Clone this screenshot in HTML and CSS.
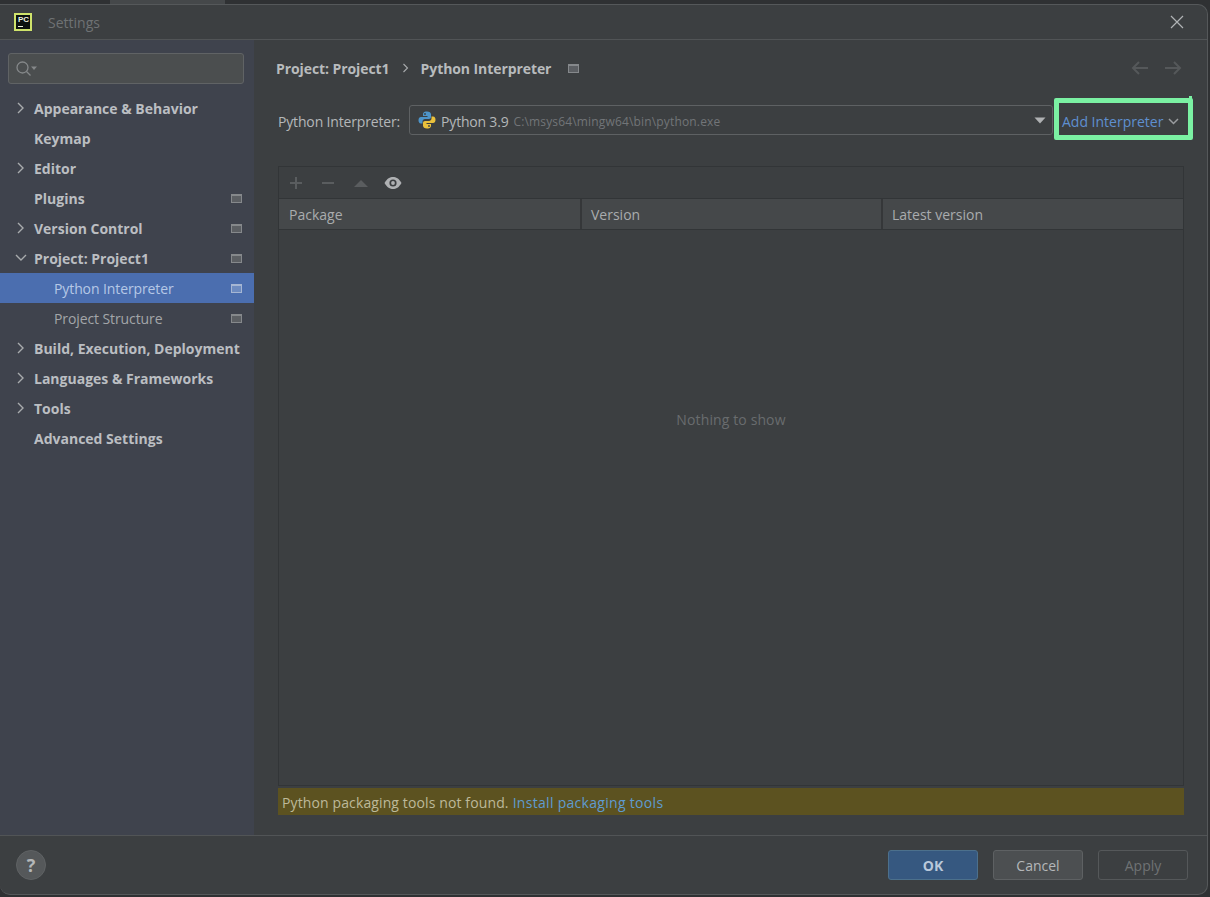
FILE: index.html
```html
<!DOCTYPE html>
<html lang="en">
<head>
  <meta charset="UTF-8" />
  <title>Settings</title>
  <link rel="stylesheet" href="styles.css">
</head>
<body>

  <div class="top-strip"><div class="top-tab"></div></div>

  <div class="dialog">
    <div class="titlebar">
      <div class="app-logo">
        <span class="app-logo-text">PC</span>
        <span class="app-logo-bar"></span>
      </div>
      <span class="titlebar-text">Settings</span>
      <svg class="close-icon" width="14" height="14" viewBox="0 0 14 14"><path d="M1 1 L13 13 M13 1 L1 13" stroke="#b0b3b5" stroke-width="1.2" fill="none"/></svg>
    </div>

    <div class="dialog-body">
      <div class="sidebar">
        <div class="search-box">
          <svg width="24" height="18" viewBox="0 0 24 18"><circle cx="7.5" cy="7.5" r="5.5" stroke="#85888a" stroke-width="1.3" fill="none"/><path d="M11.5 11.5 L15.5 15.5" stroke="#85888a" stroke-width="1.3"/><path d="M16 6.5 H22 L19 10 Z" fill="#85888a"/></svg>
        </div>

        <div class="tree">
          <div class="tree-row bold"><svg class="arrow" width="10" height="12" viewBox="0 0 10 12"><path d="M2 1 L7 6 L2 11" stroke="#a8abad" stroke-width="1.4" fill="none"/></svg><span>Appearance &amp; Behavior</span></div>
          <div class="tree-row bold"><span class="arrow-space"></span><span>Keymap</span></div>
          <div class="tree-row bold"><svg class="arrow" width="10" height="12" viewBox="0 0 10 12"><path d="M2 1 L7 6 L2 11" stroke="#a8abad" stroke-width="1.4" fill="none"/></svg><span>Editor</span></div>
          <div class="tree-row bold"><span class="arrow-space"></span><span>Plugins</span><span class="page-icon"></span></div>
          <div class="tree-row bold"><svg class="arrow" width="10" height="12" viewBox="0 0 10 12"><path d="M2 1 L7 6 L2 11" stroke="#a8abad" stroke-width="1.4" fill="none"/></svg><span>Version Control</span><span class="page-icon"></span></div>
          <div class="tree-row bold"><svg class="arrow arrow-open" width="12" height="10" viewBox="0 0 12 10"><path d="M1 2 L6 7 L11 2" stroke="#a8abad" stroke-width="1.4" fill="none"/></svg><span>Project: Project1</span><span class="page-icon"></span></div>
          <div class="tree-row child selected"><span>Python Interpreter</span><span class="page-icon"></span></div>
          <div class="tree-row child"><span>Project Structure</span><span class="page-icon"></span></div>
          <div class="tree-row bold"><svg class="arrow" width="10" height="12" viewBox="0 0 10 12"><path d="M2 1 L7 6 L2 11" stroke="#a8abad" stroke-width="1.4" fill="none"/></svg><span>Build, Execution, Deployment</span></div>
          <div class="tree-row bold"><svg class="arrow" width="10" height="12" viewBox="0 0 10 12"><path d="M2 1 L7 6 L2 11" stroke="#a8abad" stroke-width="1.4" fill="none"/></svg><span>Languages &amp; Frameworks</span></div>
          <div class="tree-row bold"><svg class="arrow" width="10" height="12" viewBox="0 0 10 12"><path d="M2 1 L7 6 L2 11" stroke="#a8abad" stroke-width="1.4" fill="none"/></svg><span>Tools</span></div>
          <div class="tree-row bold"><span class="arrow-space"></span><span>Advanced Settings</span></div>
        </div>
      </div>

      <div class="content">
        <div class="breadcrumb">
          <span class="crumb">Project: Project1</span>
          <svg class="crumb-sep" width="7" height="10" viewBox="0 0 7 10"><path d="M1.5 1 L5.5 5 L1.5 9" stroke="#a8abad" stroke-width="1.1" fill="none"/></svg>
          <span class="crumb">Python Interpreter</span>
          <span class="page-icon crumb-icon"></span>
          <div class="nav-arrows">
            <svg width="18" height="14" viewBox="0 0 18 14"><path d="M17 7 H2 M8 1 L2 7 L8 13" stroke="#55585a" stroke-width="2" fill="none"/></svg>
            <svg width="18" height="14" viewBox="0 0 18 14"><path d="M1 7 H16 M10 1 L16 7 L10 13" stroke="#55585a" stroke-width="2" fill="none"/></svg>
          </div>
        </div>

        <div class="interpreter-row">
          <span class="interpreter-label">Python Interpreter:</span>
          <div class="interpreter-select">
            <svg class="python-logo" width="18" height="18" viewBox="0 0 18 18">
              <path d="M9 0.5 C5.5 0.5 5 2 5 3.5 V5 H9.5 V6 H3 C1.2 6 0.5 7.5 0.5 9.2 C0.5 11 1.2 12.5 3 12.5 H4.5 V10.5 C4.5 9 5.7 8 7 8 H11 C12.2 8 13 7.2 13 6 V3.5 C13 1.5 11.5 0.5 9 0.5 Z" fill="#4d94c9"/>
              <path d="M9 17.5 C12.5 17.5 13 16 13 14.5 V13 H8.5 V12 H15 C16.8 12 17.5 10.5 17.5 8.8 C17.5 7 16.8 5.5 15 5.5 H13.5 V7.5 C13.5 9 12.3 10 11 10 H7 C5.8 10 5 10.8 5 12 V14.5 C5 16.5 6.5 17.5 9 17.5 Z" fill="#e9c13c"/>
              <circle cx="7" cy="3" r="0.9" fill="#3c3f41"/>
              <circle cx="11" cy="15" r="0.9" fill="#3c3f41"/>
            </svg>
            <span class="interpreter-name">Python 3.9</span>
            <span class="interpreter-path">C:\msys64\mingw64\bin\python.exe</span>
            <svg class="select-caret" width="12" height="7" viewBox="0 0 12 7"><path d="M0.5 0.5 H11.5 L6 6.5 Z" fill="#afb1b3"/></svg>
          </div>
          <div class="add-interpreter">
            <span>Add Interpreter</span>
            <svg width="11" height="7" viewBox="0 0 11 7"><path d="M1 1 L5.5 5.5 L10 1" stroke="#9a9da0" stroke-width="1.5" fill="none"/></svg>
          </div>
        </div>

        <div class="packages">
          <div class="packages-toolbar">
            <svg width="14" height="14" viewBox="0 0 14 14"><path d="M7 1 V13 M1 7 H13" stroke="#5a5d5f" stroke-width="2"/></svg>
            <svg width="14" height="14" viewBox="0 0 14 14"><path d="M1 7 H13" stroke="#5a5d5f" stroke-width="2"/></svg>
            <svg width="16" height="14" viewBox="0 0 16 14"><path d="M1 11 L8 4 L15 11 Z" fill="#5a5d5f"/></svg>
            <svg class="eye-icon" width="18" height="14" viewBox="0 0 18 14"><path d="M0.5 7 C3 2.5 6 1 9 1 C12 1 15 2.5 17.5 7 C15 11.5 12 13 9 13 C6 13 3 11.5 0.5 7 Z" fill="#afb1b3"/><circle cx="9" cy="7" r="3.6" fill="#3c3f41"/><circle cx="9" cy="7" r="1.9" fill="#afb1b3"/></svg>
          </div>
          <div class="packages-header">
            <div class="col">Package</div>
            <div class="col">Version</div>
            <div class="col">Latest version</div>
          </div>
          <div class="packages-empty">Nothing to show</div>
        </div>

        <div class="warning-bar">Python packaging tools not found. <a class="warning-link">Install packaging tools</a></div>
      </div>
    </div>

    <div class="footer">
      <div class="help-btn">?</div>
      <div class="footer-buttons">
        <button class="btn btn-ok">OK</button>
        <button class="btn btn-cancel">Cancel</button>
        <button class="btn btn-apply">Apply</button>
      </div>
    </div>
  </div>

</body>
</html>
```

FILE: styles.css
```css
* {
  box-sizing: border-box;
  margin: 0;
  padding: 0;
}

html, body {
  width: 1210px;
  height: 897px;
  overflow: hidden;
}

body {
  font-family: "Open Sans", "Noto Sans", sans-serif;
  font-size: 14px;
  background: #2f3133;
  color: #b4b7b9;
  display: flex;
  flex-direction: column;
}

.top-strip {
  height: 4px;
  background: #2f3133;
  padding-left: 110px;
}

.top-tab {
  width: 115px;
  height: 4px;
  background: #45484a;
}

.dialog {
  height: 891px;
  margin-right: 2px;
  display: flex;
  flex-direction: column;
  background: #3c3f41;
  border: 1px solid #55585a;
  border-left: none;
  border-radius: 0 10px 10px 10px;
  overflow: hidden;
}

.titlebar {
  height: 35px;
  flex-shrink: 0;
  display: flex;
  align-items: center;
  padding: 0 23px 0 14px;
  border-bottom: 1px solid #515456;
}

.app-logo {
  width: 18px;
  height: 18px;
  background: #0d1210;
  border: 2px solid #cfe36b;
  display: flex;
  flex-direction: column;
  padding: 1px 0 0 2px;
  font-family: "Liberation Sans", sans-serif;
}

.app-logo-text {
  font-size: 8px;
  line-height: 7px;
  font-weight: bold;
  color: #eef4e0;
}

.app-logo-bar {
  width: 5px;
  height: 1px;
  background: #eef4e0;
  margin-top: 3px;
}

.titlebar-text {
  margin-left: 16px;
  font-size: 14px;
  color: #6f7274;
}

.close-icon {
  margin-left: auto;
}

.dialog-body {
  flex: 1;
  display: flex;
  min-height: 0;
}

.sidebar {
  width: 254px;
  flex-shrink: 0;
  background: #3f434d;
  padding-top: 13px;
}

.search-box {
  height: 31px;
  margin: 0 10px 0 8px;
  display: flex;
  align-items: center;
  padding-left: 6px;
  background: #4b4e4f;
  border: 1px solid #606365;
  border-radius: 3px;
}

.tree {
  margin-top: 9px;
}

.tree-row {
  height: 30px;
  display: flex;
  align-items: center;
  padding: 0 12px 0 16px;
  color: #b4b7ba;
}

.tree-row.bold {
  font-weight: 700;
  font-size: 14px;
  color: #bbbec2;
}

.tree-row.child {
  padding-left: 54px;
  letter-spacing: -0.1px;
  color: #a3a6a9;
}

.tree-row.selected {
  background: #4b6eaf;
  color: #b6c8e6;
}

.arrow {
  margin-right: 8px;
  flex-shrink: 0;
}

.arrow-open {
  margin-right: 7px;
  margin-left: -1px;
}

.arrow-space {
  width: 18px;
  flex-shrink: 0;
}

.page-icon {
  width: 11px;
  height: 9px;
  margin-left: auto;
  flex-shrink: 0;
  border: 1px solid #85888b;
  border-top-width: 2px;
  background: #5c5f63;
}

.tree-row.selected .page-icon {
  border-color: #a5b6d3;
  background: #6d8bc0;
}

.content {
  flex: 1;
  min-width: 0;
  padding: 0 23px 0 24px;
  display: flex;
  flex-direction: column;
}

.breadcrumb {
  height: 56px;
  margin-left: -2px;
  flex-shrink: 0;
  display: flex;
  align-items: center;
}

.crumb {
  font-weight: 700;
  letter-spacing: -0.08px;
  color: #b8bbbd;
}

.crumb-sep {
  margin: 0 12px;
}

.crumb-icon {
  margin-left: 17px;
}

.nav-arrows {
  margin-left: auto;
  display: flex;
  gap: 15px;
  padding-right: 2px;
}

.interpreter-row {
  height: 42px;
  margin-top: 2px;
  flex-shrink: 0;
  display: flex;
  align-items: center;
}

.interpreter-label {
  margin-right: 9px;
  margin-top: 4px;
  letter-spacing: -0.16px;
  color: #b4b7b9;
}

.interpreter-select {
  flex: 1;
  height: 30px;
  margin-top: 2px;
  display: flex;
  align-items: center;
  padding: 0 6px 0 8px;
  background: #3c3f41;
  border: 1px solid #5e6163;
  border-radius: 3px;
}

.python-logo {
  flex-shrink: 0;
  margin-right: 5px;
}

.interpreter-name {
  margin-top: 2px;
  letter-spacing: -0.2px;
  color: #b4b7b9;
}

.interpreter-path {
  margin-left: 5px;
  margin-top: 3px;
  font-size: 12px;
  letter-spacing: 0.16px;
  color: #727578;
}

.select-caret {
  margin-left: auto;
}

.add-interpreter {
  position: relative;
  width: 139px;
  height: 42px;
  flex-shrink: 0;
  margin-left: 1px;
  margin-right: -9px;
  display: flex;
  align-items: center;
  justify-content: space-between;
  padding: 4px 9px 0 3px;
  border: 5px solid #7bf1a3;
  border-radius: 2px;
  color: #5f8fd0;
}

/* small tail of the hand drawn box */
.add-interpreter::after {
  content: "";
  position: absolute;
  top: -7px;
  right: -4px;
  width: 3px;
  height: 3px;
  background: #7bf1a3;
}

.add-interpreter span {
  white-space: nowrap;
}

.packages {
  height: 620px;
  margin-top: 26px;
  flex-shrink: 0;
  display: flex;
  flex-direction: column;
  border: 1px solid #323537;
}

.packages-toolbar {
  height: 32px;
  flex-shrink: 0;
  display: flex;
  align-items: center;
  gap: 18px;
  padding-left: 10px;
  border-bottom: 1px solid #323537;
}

.eye-icon {
  margin-left: -3px;
}

.packages-header {
  height: 31px;
  flex-shrink: 0;
  display: grid;
  grid-template-columns: 303px 301px 1fr;
  background: #45484a;
  border-bottom: 1px solid #323537;
}

.col {
  display: flex;
  align-items: center;
  padding-left: 9px;
  border-right: 2px solid #353739;
  color: #a9acae;
}

.col:first-child {
  padding-left: 10px;
}

.col:last-child {
  border-right: none;
}

.packages-empty {
  flex: 1;
  display: flex;
  justify-content: center;
  padding-top: 180px;
  letter-spacing: 0.12px;
  color: #696c6e;
}

.warning-bar {
  height: 27px;
  margin-top: 2px;
  flex-shrink: 0;
  display: flex;
  align-items: center;
  gap: 4px;
  padding: 1px 0 0 4px;
  background: #5c5220;
  letter-spacing: 0.12px;
  color: #bdb99a;
}

.warning-link {
  letter-spacing: 0.3px;
  color: #5f9bd0;
}

.footer {
  height: 59px;
  flex-shrink: 0;
  display: flex;
  align-items: center;
  justify-content: space-between;
  padding: 0 19px 0 16px;
  border-top: 1px solid #515456;
}

.help-btn {
  width: 30px;
  height: 30px;
  display: flex;
  align-items: center;
  justify-content: center;
  border-radius: 50%;
  background: #55585a;
  border: 1px solid #5f6264;
  font-weight: 700;
  font-size: 18px;
  color: #b4b7b9;
}

.footer-buttons {
  display: flex;
  gap: 15px;
}

.btn {
  width: 90px;
  height: 30px;
  font-family: inherit;
  font-size: 14px;
  border-radius: 3px;
}

.btn-ok {
  background: #365880;
  border: 1px solid #4c708c;
  color: #b9c8da;
  font-weight: 700;
}

.btn-cancel {
  background: #4c4f51;
  border: 1px solid #5e6163;
  color: #b4b7b9;
}

.btn-apply {
  background: #3c3f41;
  border: 1px solid #55585a;
  color: #6f7274;
}
```
